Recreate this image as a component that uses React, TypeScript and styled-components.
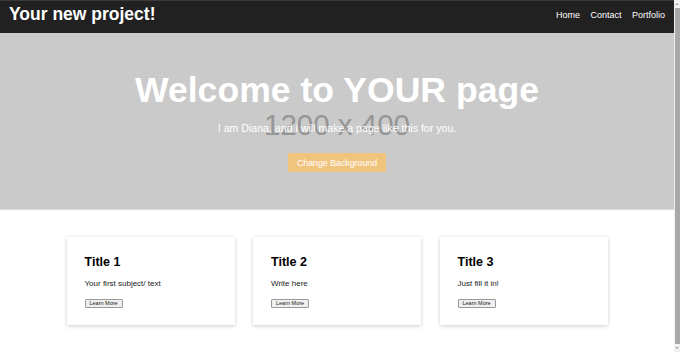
import React from "react";
import styled, { createGlobalStyle } from "styled-components";

const cards = [
    { title: "Title 1", text: "Your first subject/ text" },
    { title: "Title 2", text: "Write here" },
    { title: "Title 3", text: "Just fill it in!" },
];

const links = ["Home", "Contact", "Portfolio"];

export default function App() {
    return (
        <Shell>
            <GlobalStyle />
            <Page>
                <Navbar>
                    <Brand>Your new project!</Brand>
                    <NavLinks>
                        {links.map(l => (
                            <NavLink key={l} href="#">
                                {l}
                            </NavLink>
                        ))}
                    </NavLinks>
                </Navbar>
                <Hero>
                    <Placeholder>1200 x 400</Placeholder>
                    <HeroContent>
                        <Heading>Welcome to YOUR page</Heading>
                        <Subtitle>I am Diana, and i will make a page like this for you.</Subtitle>
                        <ChangeButton>Change Background</ChangeButton>
                    </HeroContent>
                </Hero>
                <CardRow>
                    {cards.map(c => (
                        <Card key={c.title}>
                            <CardTitle>{c.title}</CardTitle>
                            <CardText>{c.text}</CardText>
                            <LearnMore>Learn More</LearnMore>
                        </Card>
                    ))}
                </CardRow>
            </Page>
            <ScrollTrack>
                <Arrow $dir="up" />
                <Thumb />
                <Arrow $dir="down" />
            </ScrollTrack>
        </Shell>
    );
}

const GlobalStyle = createGlobalStyle`
    body {
        margin: 0;
        font-family: "Liberation Sans", Arial, sans-serif;
        background: #fff;
        overflow: hidden;
    }
`;

const Shell = styled.div`
    display: flex;
    height: 352px;
`;

const Page = styled.main`
    flex: 1;
    min-width: 0;
`;

const ScrollTrack = styled.aside`
    display: flex;
    flex-direction: column;
    align-items: center;
    width: 6px;
    background: #f1f1f1;
`;

const Arrow = styled.div<{ $dir: "up" | "down" }>`
    flex: none;
    width: 0;
    height: 0;
    margin: 3px 0;
    border-left: 2px solid transparent;
    border-right: 2px solid transparent;
    ${p => (p.$dir === "up" ? "border-bottom: 2px solid #a3a3a3;" : "border-top: 2px solid #a3a3a3;")}
`;

const Thumb = styled.div`
    flex: 1;
    width: 5px;
    background: #a8a8a8;
`;

const Navbar = styled.nav`
    display: flex;
    justify-content: space-between;
    align-items: center;
    height: 32px;
    padding: 0 9px;
    background: #212121;
    border-top: 1px solid #3a3a3a;
`;

const Brand = styled.div`
    color: #fff;
    font-size: 17.5px;
    font-weight: bold;
    line-height: 1;
    margin-top: -4px;
`;

const NavLinks = styled.div`
    display: flex;
    gap: 10.5px;
    margin-top: -5px;
`;

const NavLink = styled.a`
    color: #fff;
    font-size: 9px;
    text-decoration: none;
`;

const Hero = styled.header`
    display: grid;
    height: 176px;
    background: #cacaca;
    border-bottom: 1px solid #dadada;
`;

const Placeholder = styled.div`
    grid-area: 1 / 1;
    place-self: center;
    margin-top: 8px;
    color: #969696;
    font-size: 29.5px;
    line-height: 1;
`;

const HeroContent = styled.div`
    grid-area: 1 / 1;
    display: flex;
    flex-direction: column;
    align-items: center;
    padding-top: 40px;
`;

const Heading = styled.h1`
    margin: 0;
    color: #fff;
    font-size: 35.6px;
    line-height: 1;
    font-weight: bold;
`;

const Subtitle = styled.p`
    margin: 14.5px 0 0;
    color: #fff;
    font-size: 10.6px;
    line-height: 1;
`;

const ChangeButton = styled.button`
    margin-top: 19.5px;
    height: 19px;
    padding: 0 8.5px;
    border: none;
    background: #f1c47d;
    color: #fff;
    font-family: inherit;
    font-size: 8.8px;
`;

const CardRow = styled.section`
    display: flex;
    justify-content: center;
    gap: 18.5px;
    margin-top: 27px;
`;

const Card = styled.div`
    box-sizing: border-box;
    width: 168px;
    height: 88px;
    padding: 19px 18px 0;
    background: #fff;
    box-shadow: 0 1px 4px rgba(0, 0, 0, 0.2);
`;

const CardTitle = styled.h2`
    margin: 0;
    font-size: 12.5px;
    line-height: 1;
    color: #000;
`;

const CardText = styled.p`
    margin: 11px 0 0;
    font-size: 8px;
    line-height: 1;
    color: #222;
`;

const LearnMore = styled.button`
    display: block;
    box-sizing: border-box;
    height: 9px;
    margin-top: 11.5px;
    padding: 0 4px;
    border: 1px solid #9a9a9a;
    border-radius: 1px;
    background: #efefef;
    color: #222;
    font-family: inherit;
    font-size: 5.5px;
    line-height: 1;
`;
